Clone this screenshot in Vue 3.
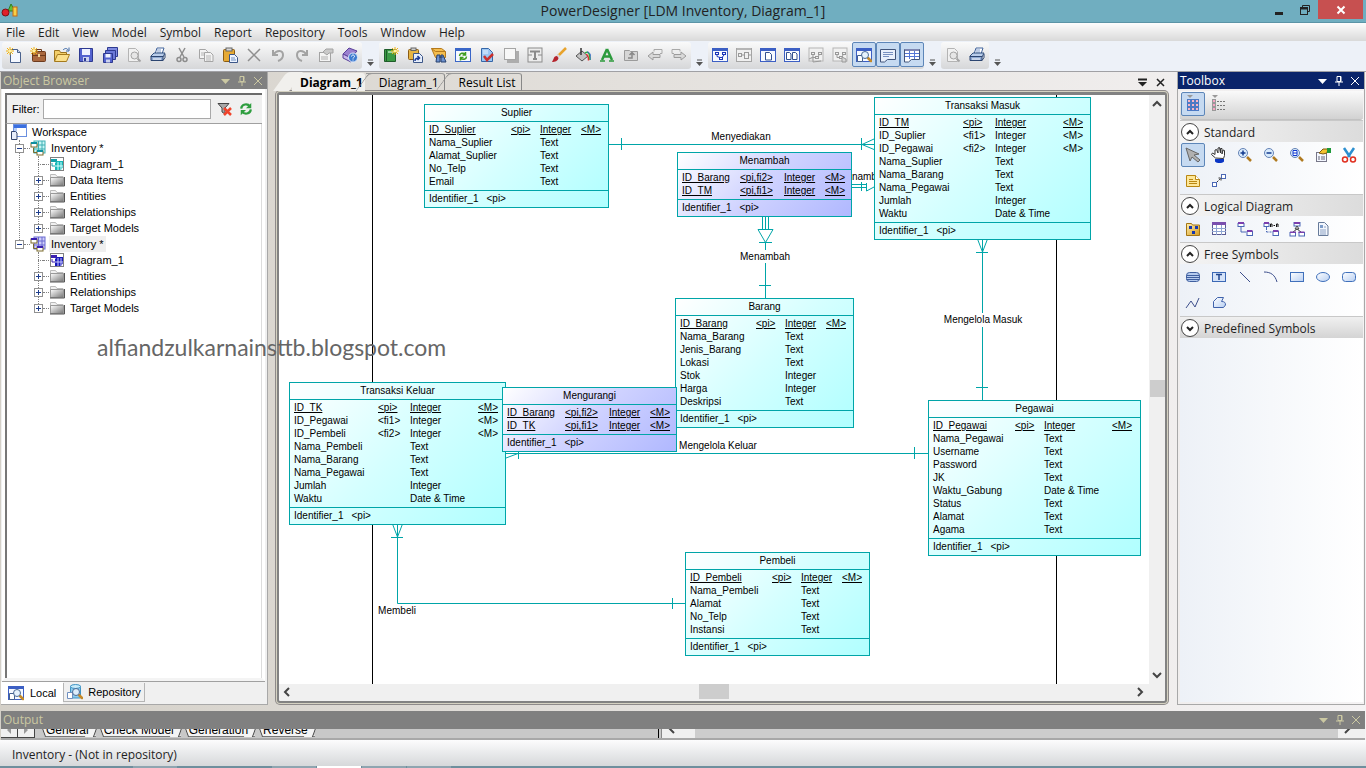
<script setup>
import { ref } from 'vue'

const menus = ['File', 'Edit', 'View', 'Model', 'Symbol', 'Report', 'Repository', 'Tools', 'Window', 'Help']

const spark = '<path d="M4 0v8M0 4h8M1 1l6 6M7 1l-6 6" stroke="#f2b311"/><circle cx="4" cy="4" r="1.5" fill="#fff3a0"/>'
const page = '<path d="M4.500 2.500h7l3 3v10h-10z" fill="#f4f8ff" stroke="#4a628c"/><path d="M11.500 2.500v3h3" fill="#c7d6ee" stroke="#4a628c"/>'
const win = (c) => `<rect x=".5" y="1.500" width="15" height="13" fill="#f6f9ff" stroke="${c}"/><rect x="1" y="1" width="14" height="3" fill="${c}"/>`
const lens = (x, y, c) => `<path d="M${x + 3} ${y + 3}l3 3" stroke="#c58a28" stroke-width="2.500" stroke-linecap="round"/><circle cx="${x}" cy="${y}" r="3.500" fill="#e4f1fc" fill-opacity=".9" stroke="${c}"/>`
const printer = '<path d="M5 7l2-6h7l-2 6" fill="#fff" stroke="#42649c"/><path d="M7 3h4M7 5h4" stroke="#7f9ccc"/><path d="M1 9l3-3h11l-2 4H1z" fill="#b9cdea" stroke="#33507c"/><path d="M1 9.500h12v4H1z" fill="#8fa9d2" stroke="#2c4570"/><path d="M13 13.500l2-3V7" fill="none" stroke="#2c4570"/><path d="M3 12h8" stroke="#fff"/>'
const preview = '<path d="M2.500 1.500h7l3 3v10h-10z" fill="#f1f1f1" stroke="#b4b4b4"/><circle cx="8.500" cy="8.500" r="3.500" fill="#e6e6e6" stroke="#a4a4a4"/><path d="M11.500 11.500l3 3" stroke="#a4a4a4" stroke-width="2"/>'
const grayNodes = '<rect x="3.500" y="5.500" width="3" height="2" fill="none" stroke="#999"/><rect x="10.500" y="5.500" width="3" height="2" fill="none" stroke="#999"/><rect x="7.500" y="9.500" width="3" height="2" fill="none" stroke="#999"/><path d="M5 8v2.500h3M11 8l-1 2" fill="none" stroke="#999"/>'
const folder = '<path d="M1.500 13.500v-11h5l1.500 2h6v9z" fill="#f0f0f0" stroke="#bbb"/><path d="M1.500 13.500V5.500h13v8z" fill="url(#gFold)" stroke="#999"/><path d="M1 14h14.500V5" fill="none" stroke="#555"/>'

const icons = {
  newDoc: page + spark,
  newProject: '<rect x="2.500" y="4.500" width="13" height="10" rx="1" fill="#a9683e" stroke="#6d3b1e"/><path d="M3 8.500h12" stroke="#6d3b1e"/><path d="M6.500 4.500v-2h5v2" fill="none" stroke="#6d3b1e"/><rect x="8" y="7" width="2" height="3" fill="#f0d9a0"/>' + spark,
  open: '<path d="M.500 14V3.500h5l1 2h6V8" fill="#f3cf6b" stroke="#9c7420"/><path d="M.500 14.500l3-7h12l-3 7z" fill="#fbe08c" stroke="#a57a1c"/><path d="M9 3c2-2 4-2 5 0M15 .500v3.500h-3" fill="none" stroke="#3c69a8"/>',
  save: '<path d="M1.500 1.500h13v13h-13z" fill="#5463cf" stroke="#2e3a91"/><rect x="4" y="2" width="8" height="6" fill="#eef2ff"/><rect x="5" y="10" width="6" height="4.500" fill="#ccd3ef"/><rect x="6" y="11" width="2" height="3" fill="#2e3a91"/>',
  saveAll: '<path d="M5.500.500h10v9h-10z" fill="#7f8be0" stroke="#2e3a91"/><path d="M3.500 3.500h10v9h-10z" fill="#6a78d8" stroke="#2e3a91"/><path d="M1.500 6.500h9v9h-9z" fill="#5463cf" stroke="#2e3a91"/><rect x="3.500" y="7" width="5" height="3.500" fill="#eef2ff"/><rect x="4" y="12.500" width="4" height="3" fill="#ccd3ef"/>',
  preview,
  print: printer,
  cut: '<path d="M5 1l5 9M11 1l-5 9" stroke="#8d8d8d" stroke-width="1.500"/><circle cx="5" cy="12.500" r="2" fill="none" stroke="#8d8d8d" stroke-width="1.500"/><circle cx="11" cy="12.500" r="2" fill="none" stroke="#8d8d8d" stroke-width="1.500"/>',
  copy: '<path d="M1.500 2.500h6l2 2v7h-8z" fill="#f3f3f3" stroke="#a5a5a5"/><path d="M6.500 5.500h6l2.500 2.500v6.500H6.500z" fill="#f3f3f3" stroke="#a5a5a5"/><path d="M8 9h5M8 11h5M8 13h5M3 6h3M3 8h3" stroke="#b5b5b5"/>',
  paste: '<rect x="1.500" y="2.500" width="11" height="12" rx="1" fill="#e6aa35" stroke="#8b5c12"/><rect x="4" y="1" width="6" height="3" fill="#d8d8d8" stroke="#666"/><path d="M7.500 7.500h5l3 3v5h-8z" fill="#eef4ff" stroke="#3d5788"/><path d="M9 11h4M9 13h5" stroke="#6f8fc0"/>',
  del: '<path d="M2 2l12 12M14 2L2 14" stroke="#8f8f8f" stroke-width="1.500"/>',
  undo: '<path d="M3 3v5h5M3.500 7.500C7 2.500 13 3 13 8c0 3-2 5-5 6" fill="none" stroke="#a3a3a3" stroke-width="2"/>',
  redo: '<path d="M13 3v5H8M12.500 7.500C9 2.500 3 3 3 8c0 3 2 5 5 6" fill="none" stroke="#a3a3a3" stroke-width="2"/>',
  props: '<rect x="1.500" y="5.500" width="11" height="9" fill="#f4f4f4" stroke="#a3a3a3"/><path d="M3 10h7M3 12h7" stroke="#b0b0b0"/><path d="M5 5l3-3h7v4h-4l-2 2z" fill="#c9c9c9" stroke="#a3a3a3"/>',
  help: '<path d="M1 7l6-6 8 3-6 7z" fill="#9a80cf" stroke="#5a3f9a"/><path d="M1 7v4l8 4V11z" fill="#c9b9ea" stroke="#5a3f9a"/><circle cx="11" cy="10.500" r="4.500" fill="#3d7bd0" stroke="#dce8fa"/><path d="M9.500 9.500c0-2 3-2 3 0 0 1-1.500 1-1.500 2M11 12.500v1" fill="none" stroke="#fff"/>',
  greenBook: '<path d="M1.500 2.500h11v12h-11z" fill="#3b9a45" stroke="#1f5d2a"/><path d="M3.500 3v11" stroke="#1f5d2a"/><rect x="5" y="4" width="6" height="2" fill="#9ad49e"/><g transform="translate(8 0)">' + spark + '</g>',
  pasteLink: '<rect x="1.500" y="2.500" width="10" height="10" rx="1" fill="#e6b545" stroke="#8b5c12"/><rect x="4" y="1" width="5" height="2.500" fill="#cfcfcf" stroke="#666"/><path d="M6.500 6.500h6l3 3v6h-9z" fill="#e7effc" stroke="#3d5788"/><path d="M8 14c0-3 2-3 4-3M10.500 9l2 2-2 2" fill="none" stroke="#1d3b98" stroke-width="1.500"/>',
  find: '<path d="M.500 1.500l10 0 4 3v6H4.500z" fill="#f4bd4e" stroke="#b5791a"/><path d="M.500 1.500l4 3h10" fill="none" stroke="#b5791a"/><path d="M6 8h3v7H5zM12 8h-2v7h5z" fill="#6f93d0" stroke="#26406f"/><path d="M8 10h4" stroke="#26406f"/>',
  refreshWin: win('#3a66c8') + '<path d="M4.500 9c0-3 4-3.500 5.500-2M10.500 5v3h-3" fill="none" stroke="#3f9c1f" stroke-width="1.500"/><path d="M11.500 9.500c0 3-4 3.500-5.500 2M5.500 13.500v-3h3" fill="none" stroke="#3f9c1f" stroke-width="1.500"/>',
  check: '<path d="M2.500 1.500h7l4 4v9h-11z" fill="#9cc6f2" stroke="#3566a8"/><path d="M4 4h5M4 6h5" stroke="#e8f3ff"/><path d="M5 9l3 4 6-6" fill="none" stroke="#c9302c" stroke-width="2.500"/>',
  shadow: '<rect x="4" y="4" width="12" height="12" fill="#adadad"/><rect x="1.500" y="1.500" width="11" height="11" fill="#f7f7f7" stroke="#a5a5a5"/>',
  textFit: '<rect x="1" y="1" width="14" height="14" fill="#ececec" stroke="#8c8c8c"/><path d="M4 5.500V4.500h8v1M8 4.500v7M6 12h4" fill="none" stroke="#8a8a8a" stroke-width="2"/><path d="M1 8h4M11 8h4" stroke="#8a8a8a"/>',
  brush: '<path d="M15 1L7 9" stroke="#e8a32c" stroke-width="2.500"/><path d="M8 8l-2 2" stroke="#d8d8d8" stroke-width="3"/><path d="M6 9c-2 0-3 1-3.500 3L1 15c3 0 6-1 6.500-4z" fill="#b4232c"/>',
  bucket: '<path d="M1 9l6-5 6 5-6 5z" fill="#c4c4c4" stroke="#555"/><path d="M6 8V1" stroke="#333" stroke-width="1.500"/><path d="M10 6c3-2 5 0 5 7" fill="none" stroke="#2faf3a" stroke-width="1.500"/><path d="M11 7.500c2 0 2.500 2 2.500 6" fill="none" stroke="#d33" stroke-width="1.500"/><path d="M12 5c3 0 4 3 4 8" fill="none" stroke="#36c" />',
  font: '<path d="M8 2L3 13M8 2l5 11M5 9.500h6" fill="none" stroke="#2c9a3d" stroke-width="2.500"/><path d="M1 14h5M10 14h5" stroke="#2c9a3d" stroke-width="1.500"/>',
  upFolder: '<path d="M1.500 13.500v-10h5l1 1h7v9z" fill="#d6d6d6" stroke="#9b9b9b"/><path d="M5 11h4V6M6.500 8L9 5.500 11.500 8" fill="none" stroke="#888" stroke-width="1.500"/>',
  back: '<path d="M1 9l5-4v2.500h7v3H6V13z" fill="#d9d9d9" stroke="#9b9b9b"/><path d="M7 4.500V2.500h8v4h-2" fill="none" stroke="#a9a9a9"/>',
  fwd: '<path d="M15 9l-5-4v2.500H3v3h7V13z" fill="#d9d9d9" stroke="#9b9b9b"/><path d="M9 4.500V2.500H1v4h2" fill="none" stroke="#a9a9a9"/>',
  diagWin: win('#3c5fc4') + '<rect x="3.500" y="5.500" width="3" height="2" fill="none" stroke="#1b35b8"/><rect x="10.500" y="5.500" width="3" height="2" fill="none" stroke="#1b35b8"/><rect x="7.500" y="10.500" width="3" height="2" fill="none" stroke="#1b35b8"/><path d="M5 8v1.500l3 1M12 8l-2 2.500" fill="none" stroke="#1b35b8"/>',
  nodesGray: '<rect x=".500" y="1.500" width="15" height="13" fill="#f0f0f0" stroke="#a5a5a5"/><rect x="1" y="1" width="14" height="2" fill="#b5b5b5"/><rect x="2.500" y="6.500" width="3" height="3" fill="none" stroke="#999"/><rect x="8.500" y="5.500" width="4" height="6" fill="none" stroke="#999"/><path d="M5.500 8h3M12.500 8H15" stroke="#999"/>',
  pageWin: win('#3c5fc4') + '<path d="M5.500 5.500h4l2 2v5.500h-6z" fill="#fff" stroke="#33518e"/>',
  pagesWin: win('#3c5fc4') + '<path d="M2.500 5.500h3l1.500 1.500v5.500H2.500zM8.500 5.500h3l1.500 1.500v5.500H8.500z" fill="#fff" stroke="#33518e"/>',
  handNodes: '<rect x="1" y="1" width="14" height="13" fill="#f1f1f1" stroke="#b5b5b5"/>' + grayNodes + '<path d="M1 12l4-2v5l8-1" fill="#d6d6d6" stroke="#999"/>',
  nodesHand: '<rect x="1" y="1" width="14" height="13" fill="#f1f1f1" stroke="#b5b5b5"/>' + grayNodes + '<path d="M10 10l4 2v3h-4z" fill="#d6d6d6" stroke="#999"/>',
  winLens: win('#3c5fc4') + '<path d="M1.500 8.500h5v6h-5z" fill="#fff" stroke="#44608f"/>' + lens(9, 8, '#4b6a94'),
  note: '<path d="M.500 2.500h15v10h-8l-3 2.500H.500z" fill="#e9f0fb" stroke="#41547a"/><path d="M3 5.500h10M3 7.500h10M3 9.500h6" stroke="#7890c0"/>',
  gridWin: '<path d="M.500 2.500h15v10h-8l-3 2.500H.500z" fill="#fff" stroke="#41547a"/><rect x="1" y="2" width="14" height="2" fill="#7e86b2"/><path d="M1 6.500h14M1 9.500h14M5.500 4v8M10.500 4v8" stroke="#5577d6"/>',
  workspace: '<rect x="2.500" y=".500" width="13" height="12" fill="#fff" stroke="#6a8fe0"/><rect x="3" y="1" width="12" height="3" fill="#3a6fe0"/><rect x="3" y="4" width="3" height="8" fill="#b7cdf4"/><path d="M.500 7.500h4l1.500 1.500v6.500H.500z" fill="#e8eefb" stroke="#34466d"/>',
  model: '<rect x="4" y="1" width="11" height="12" fill="#c8f6f6" stroke="#3fb0b4"/><path d="M8.500 1v12M4 5h11M4 9h11M12 1v12" stroke="#3fb0b4"/><path d="M3.500 8v4.500H7" fill="none" stroke="#7a6a2a"/><rect x="1" y="3" width="6" height="4" fill="#fff" stroke="#7a6a2a"/><rect x="1" y="2" width="6" height="2" fill="#0d8fa0"/><rect x="7" y="11" width="6" height="4" fill="#fff" stroke="#7a6a2a"/><rect x="7" y="10" width="6" height="2" fill="#0d8fa0"/>',
  modelB: '<rect x="4" y="1" width="11" height="12" fill="#cfcffa" stroke="#6a6ad0"/><path d="M8.500 1v12M4 5h11M4 9h11M12 1v12" stroke="#6a6ad0"/><path d="M3.500 8v4.500H7" fill="none" stroke="#7a6a2a"/><rect x="1" y="3" width="6" height="4" fill="#fff" stroke="#7a6a2a"/><rect x="1" y="2" width="6" height="2" fill="#3a1fb0"/><rect x="7" y="11" width="6" height="4" fill="#fff" stroke="#7a6a2a"/><rect x="7" y="10" width="6" height="2" fill="#3a1fb0"/>',
  diagram: '<rect x="1.500" y="1.500" width="13" height="13" fill="#fff" stroke="#808080"/><rect x="2" y="3" width="6" height="3" fill="#12a0a8"/><path d="M3 7v3h3" fill="none" stroke="#12a0a8"/><path d="M6 7l2-2h6v6l-2 3H6z" fill="#14b8b8"/><path d="M6 10h8M9 6v8M12 6v8" stroke="#d5ffff"/>',
  diagramB: '<rect x="1.500" y="1.500" width="13" height="13" fill="#fff" stroke="#808080"/><rect x="2" y="3" width="6" height="3" fill="#3a1fb0"/><path d="M3 7v3h3" fill="none" stroke="#3a1fb0"/><path d="M6 7l2-2h6v6l-2 3H6z" fill="#1818b8"/><path d="M6 10h8M9 6v8M12 6v8" stroke="#c8c8ff"/>',
  folder,
  repo: '<path d="M3.500 2v12h10V2z" fill="#8ccdf0" stroke="#3f93c4"/><ellipse cx="8.500" cy="2.500" rx="5" ry="2" fill="#c9ecfb" stroke="#3f93c4"/><path d="M.500 8.500h5v6h-5z" fill="#fff" stroke="#6f8fc0"/>' + lens(9, 8, '#4b6a94'),
  clearFilter: '<path d="M1 2.500h11L8 7v6l-3-2V7z" fill="#a8a8a8" stroke="#444"/><path d="M7 7l7 7M14 7l-7 7" stroke="#f0442c" stroke-width="2.500"/>',
  reload: '<path d="M2.500 7.500C3 2 10 1.500 12.500 5" fill="none" stroke="#2e9e3f" stroke-width="2.500"/><path d="M14 1v6H8z" fill="#2e9e3f"/><path d="M13.500 8.500C13 14 6 14.500 3.500 11" fill="none" stroke="#2e9e3f" stroke-width="2.500"/><path d="M2 15V9h6z" fill="#2e9e3f"/>',
  pointer: '<path d="M1 1l13 6-5 1 6 5-2 2-6-5-2 4z" fill="#b0b0b0" stroke="#666"/>',
  hand: '<path d="M4.500 11L.500 7.500l1-1.500 2.500 1.500V3l1.500-.500L7 6V1l1.500-.500L9.500 6V1.500l1.500 0V7l1-4 1.500.500v5l-1 3z" fill="#fff" stroke="#333"/><path d="M4 12h9v2.500c-2 2-7 2-9 0z" fill="#0a35c4"/>',
  zoomIn: '<path d="M10 10l4 4" stroke="#b07a20" stroke-width="2.500"/><circle cx="6" cy="6" r="4.500" fill="#d9ebfc" stroke="#6482b5"/><path d="M3.500 6h5M6 3.500v5" stroke="#123a8f" stroke-width="1.500"/>',
  zoomOut: '<path d="M10 10l4 4" stroke="#b07a20" stroke-width="2.500"/><circle cx="6" cy="6" r="4.500" fill="#d9ebfc" stroke="#6482b5"/><path d="M3.500 6h5" stroke="#123a8f" stroke-width="1.500"/>',
  zoomFit: '<path d="M10 10l4 4" stroke="#b07a20" stroke-width="2.500"/><circle cx="6" cy="6" r="4.500" fill="#d9ebfc" stroke="#6482b5"/><path d="M4 3.500h4v5H4zM4 6h4" fill="#fff" stroke="#123ad0"/>',
  propsCol: '<rect x="1.500" y="5.500" width="10" height="9" fill="#f4f7ff" stroke="#778"/><path d="M3 10h2M6 10h4M3 12h2M6 12h4" stroke="#667"/><path d="M4 6l4-4h5l-1 4-4 1z" fill="#f2c22e" stroke="#7c5a10"/><rect x="12" y="1" width="4" height="5" fill="#1f9a3a"/>',
  scissors: '<path d="M3 1l6 9M13 1L7 10" stroke="#2c8fd0" stroke-width="2.500"/><circle cx="4" cy="12.500" r="2.500" fill="none" stroke="#e03020" stroke-width="1.500"/><circle cx="12" cy="12.500" r="2.500" fill="none" stroke="#e03020" stroke-width="1.500"/>',
  noteY: '<path d="M1.500 2.500h9l4 4v7h-13z" fill="#fde79a" stroke="#b98712"/><path d="M10.500 2.500v4h4" fill="#fff" stroke="#b98712"/><path d="M4 6.500h4M4 8.500h8M4 10.500h8" stroke="#b98712"/>',
  link: '<rect x="1.500" y="9.500" width="4" height="4" fill="#fff" stroke="#4a67b5"/><rect x="10.500" y="1.500" width="4" height="4" fill="#fff" stroke="#4a67b5"/><path d="M6 9l4-4M7.500 5H10v2.500" fill="none" stroke="#333" stroke-dasharray="2 1"/>',
  pkg: '<path d="M1.500 14.500v-12h5l1 1.500h7v10.500z" fill="url(#gGold)" stroke="#a47616"/><path d="M4 5h3v3H4zM10 5h3v3h-3zM7 10h3v3H7z" fill="#1437b0"/>',
  entity: '<rect x="1.500" y="1.500" width="13" height="12" fill="#fff" stroke="#5a5a92"/><rect x="1" y="1" width="14" height="3" fill="#7a4fae"/><path d="M1 7.500h14M1 10.500h14M5.500 4v10M10.500 4v10" stroke="#8fa5d2"/>',
  rel: '<rect x="1" y="2.500" width="6" height="3" fill="#fff" stroke="#4a67b5"/><rect x="1" y="1" width="6" height="2" fill="#7a3fae"/><path d="M4 6v5h5" fill="none" stroke="#4a67b5"/><rect x="10" y="10.500" width="5.500" height="4" fill="#fff" stroke="#4a67b5"/><rect x="10" y="9" width="5.500" height="2" fill="#7a3fae"/>',
  nn: '<rect x="1" y="2.500" width="5" height="3" fill="#fff" stroke="#4a67b5"/><rect x="1" y="1" width="5" height="2" fill="#7a3fae"/><path d="M3.500 6v5h5" fill="none" stroke="#4a67b5" stroke-dasharray="3 1"/><rect x="10" y="10.500" width="5.500" height="4" fill="#fff" stroke="#4a67b5"/><rect x="10" y="9" width="5.500" height="2" fill="#7a3fae"/><path d="M7.500 6V3H9v3M13.500 6V3H15v3M10.500 4.500H12" fill="none" stroke="#111"/>',
  inherit: '<rect x="5" y="1.500" width="6" height="3.500" fill="#fff" stroke="#4a67b5"/><rect x="5" y="1" width="6" height="2" fill="#7a3fae"/><path d="M8 5L6 8h4zM8 8L4 11M8 8l4 3" fill="none" stroke="#444"/><rect x="1" y="11.500" width="5.500" height="3.500" fill="#fff" stroke="#4a67b5"/><rect x="1" y="10.500" width="6" height="1.500" fill="#7a3fae"/><rect x="10" y="11.500" width="5.500" height="3.500" fill="#fff" stroke="#4a67b5"/><rect x="9.500" y="10.500" width="6" height="1.500" fill="#7a3fae"/>',
  file: '<path d="M3.500 1.500h6l3.500 3.500v9.500H3.500z" fill="#f2f6fd" stroke="#667a99"/><rect x="5" y="4" width="3" height="3" fill="#7d9cc9"/><path d="M5 9h6M5 11h6M5 13h6M9 6h2" stroke="#8ea3c4"/>',
  title: '<rect x="1.500" y="3.500" width="13" height="9" rx="3" fill="#b5cbee" stroke="#3f5f9f"/><path d="M1.500 6.500h13M1.500 8.500h13M1.500 10.500h13" stroke="#3f5f9f"/>',
  text: '<rect x="1.500" y="3.500" width="13" height="9" fill="#d4e2f8" stroke="#3b68b5"/><path d="M5 5.500h6M8 5.500V11" stroke="#1f458e" stroke-width="1.500"/>',
  line: '<path d="M3 3l10 10" stroke="#3d4f8c"/>',
  arc: '<path d="M1 3c7 0 11 3 13 10" fill="none" stroke="#3d4f8c"/>',
  rect: '<rect x="1.500" y="3.500" width="13" height="9" fill="url(#gBlue)" stroke="#4070bb"/>',
  ellipse: '<ellipse cx="8" cy="8" rx="6.500" ry="4.500" fill="url(#gBlue)" stroke="#4070bb"/>',
  rrect: '<rect x="1.500" y="3.500" width="13" height="9" rx="3" fill="url(#gBlue)" stroke="#4070bb"/>',
  poly: '<path d="M1 13l5-7 4 6 4-9" fill="none" stroke="#3d4f8c"/>',
  polygon: '<path d="M2.500 12.500V6.500l4-4h6l-2 4c3 0 4 1 4 3.500l-2 2.500z" fill="url(#gBlue)" stroke="#4062ab"/>',
  viewGrid: '<path d="M2 0h6L5 3z" fill="#999"/>' + [0, 1, 2].map(r => [0, 1, 2].map(c => `<rect x="${2.500 + c * 4}" y="${4.500 + r * 4}" width="3" height="3" fill="#f7b5c5" stroke="#4c79c4"/>`).join('')).join(''),
  viewList: '<path d="M1 0h6L4 3z" fill="#999"/>' + [0, 1, 2].map(r => `<rect x="1.500" y="${4.500 + r * 4}" width="3" height="3" fill="#f7a5c5" stroke="#999"/><path d="M6 ${6.500 + r * 4}h9" stroke="#777" stroke-dasharray="2 1"/>`).join('')
}

const toolbars = [
  ['newDoc', 'newProject', 'open', 'save', 'saveAll', 'preview', 'print', 'cut', 'copy', 'paste', 'del', 'undo', 'redo', 'props', 'help'],
  ['greenBook', 'pasteLink', 'find', 'refreshWin', 'check', 'shadow', 'textFit', 'brush', 'bucket', 'font', 'upFolder', 'back', 'fwd'],
  ['diagWin', 'nodesGray', 'pageWin', 'pagesWin', 'handNodes', 'nodesHand', 'winLens', 'note', 'gridWin'],
  ['preview', 'print']
]
const pressed = ['winLens', 'note', 'gridWin']

const filter = ref('')
const tree = [
  {
    label: 'Inventory *', icon: 'model', selected: false, kids: [
      { label: 'Diagram_1', icon: 'diagram' }, { label: 'Data Items', icon: 'folder' }, { label: 'Entities', icon: 'folder' },
      { label: 'Relationships', icon: 'folder' }, { label: 'Target Models', icon: 'folder' }
    ]
  },
  {
    label: 'Inventory *', icon: 'modelB', selected: true, kids: [
      { label: 'Diagram_1', icon: 'diagramB' }, { label: 'Entities', icon: 'folder' },
      { label: 'Relationships', icon: 'folder' }, { label: 'Target Models', icon: 'folder' }
    ]
  }
]

const pi = '<pi>'
const M = '<M>'
// cols: widths of the name, key and type columns
const entities = [
  { name: 'Suplier', x: 145, y: 9, w: 185, cols: [82, 29, 41], rows: [['ID_Suplier', pi, 'Integer', M, 1], ['Nama_Suplier', '', 'Text'], ['Alamat_Suplier', '', 'Text'], ['No_Telp', '', 'Text'], ['Email', '', 'Text']] },
  { name: 'Barang', x: 396, y: 203, w: 179, cols: [76, 29, 41], rows: [['ID_Barang', pi, 'Integer', M, 1], ['Nama_Barang', '', 'Text'], ['Jenis_Barang', '', 'Text'], ['Lokasi', '', 'Text'], ['Stok', '', 'Integer'], ['Harga', '', 'Integer'], ['Deskripsi', '', 'Text']] },
  { name: 'Menambah', x: 398, y: 57, w: 175, link: true, cols: [58, 44, 41], rows: [['ID_Barang', '<pi,fi2>', 'Integer', M, 1], ['ID_TM', '<pi,fi1>', 'Integer', M, 1]] },
  { name: 'Transaksi Masuk', x: 595, y: 2, w: 217, cols: [84, 32, 68], rows: [['ID_TM', pi, 'Integer', M, 1], ['ID_Suplier', '<fi1>', 'Integer', M], ['ID_Pegawai', '<fi2>', 'Integer', M], ['Nama_Suplier', '', 'Text'], ['Nama_Barang', '', 'Text'], ['Nama_Pegawai', '', 'Text'], ['Jumlah', '', 'Integer'], ['Waktu', '', 'Date & Time']] },
  { name: 'Transaksi Keluar', x: 10, y: 287, w: 217, cols: [84, 32, 68], rows: [['ID_TK', pi, 'Integer', M, 1], ['ID_Pegawai', '<fi1>', 'Integer', M], ['ID_Pembeli', '<fi2>', 'Integer', M], ['Nama_Pembeli', '', 'Text'], ['Nama_Barang', '', 'Text'], ['Nama_Pegawai', '', 'Text'], ['Jumlah', '', 'Integer'], ['Waktu', '', 'Date & Time']] },
  { name: 'Mengurangi', x: 223, y: 292, w: 175, link: true, cols: [58, 44, 41], rows: [['ID_Barang', '<pi,fi2>', 'Integer', M, 1], ['ID_TK', '<pi,fi1>', 'Integer', M, 1]] },
  { name: 'Pegawai', x: 649, y: 305, w: 213, cols: [82, 29, 68], rows: [['ID_Pegawai', pi, 'Integer', M, 1], ['Nama_Pegawai', '', 'Text'], ['Username', '', 'Text'], ['Password', '', 'Text'], ['JK', '', 'Text'], ['Waktu_Gabung', '', 'Date & Time'], ['Status', '', 'Text'], ['Alamat', '', 'Text'], ['Agama', '', 'Text']] },
  { name: 'Pembeli', x: 406, y: 457, w: 185, cols: [82, 29, 41], rows: [['ID_Pembeli', pi, 'Integer', M, 1], ['Nama_Pembeli', '', 'Text'], ['Alamat', '', 'Text'], ['No_Telp', '', 'Text'], ['Instansi', '', 'Text']] }
]
const place = (e) => ({ left: e.x + 'px', top: e.y + 'px', width: e.w + 'px' })
const columns = (e) => ({ gridTemplateColumns: e.cols.map(c => c + 'px').join(' ') + ' 1fr' })

const palette = [
  { title: 'Standard', open: true, tools: ['pointer', 'hand', 'zoomIn', 'zoomOut', 'zoomFit', 'propsCol', 'scissors', 'noteY', 'link'] },
  { title: 'Logical Diagram', open: true, tools: ['pkg', 'entity', 'rel', 'nn', 'inherit', 'file'] },
  { title: 'Free Symbols', open: true, tools: ['title', 'text', 'line', 'arc', 'rect', 'ellipse', 'rrect', 'poly', 'polygon'] },
  { title: 'Predefined Symbols', open: false, tools: [] }
]
const outTabs = ['General', 'Check Model', 'Generation', 'Reverse']
</script>

<template>
  <div class="app">
    <svg class="defs" width="0" height="0" aria-hidden="true">
      <defs>
        <linearGradient id="gFold" x1="0" y1="0" x2="1" y2="1"><stop offset="0" stop-color="#fff" /><stop offset="1" stop-color="#777" /></linearGradient>
        <linearGradient id="gGold" x1="0" y1="0" x2="1" y2="1"><stop offset="0" stop-color="#fff0b0" /><stop offset="1" stop-color="#d69a1e" /></linearGradient>
        <linearGradient id="gBlue" x1="0" y1="0" x2="1" y2="1"><stop offset="0" stop-color="#fff" /><stop offset="1" stop-color="#b8cff2" /></linearGradient>
      </defs>
    </svg>

    <header class="title">
      <svg class="logo" width="18" height="16" viewBox="0 0 18 16"><path d="M7 8l3-7 4 7z" fill="#5fbf3a" stroke="#2f7d22" /><circle cx="4.500" cy="9.500" r="3.500" fill="#e0202a" stroke="#7d1015" /><rect x="12" y="4" width="4" height="9" fill="#f7d047" stroke="#c86a12" /></svg>
      <h1>PowerDesigner [LDM Inventory, Diagram_1]</h1>
      <div class="winbtns">
        <button aria-label="Minimize"><svg width="10" height="10"><path d="M1 8.500h8" stroke="#222" stroke-width="3" /></svg></button>
        <button aria-label="Restore"><svg width="12" height="12"><path d="M3.500 3V1.500h7v6H9" fill="none" stroke="#222" /><rect x="1.500" y="3.500" width="7" height="7" fill="none" stroke="#222" /><path d="M1 4.500h8" stroke="#222" stroke-width="2" /></svg></button>
        <button class="close" aria-label="Close"><svg width="10" height="10"><path d="M1.500 1.500l7 7M8.500 1.500l-7 7" stroke="#fff" stroke-width="2" /></svg></button>
      </div>
    </header>

    <nav class="menu"><button v-for="m in menus" :key="m">{{ m }}</button></nav>

    <div class="toolbar">
      <template v-for="(g, gi) in toolbars" :key="gi">
        <div class="group">
          <button v-for="i in g" :key="i" :class="{ on: pressed.includes(i) }" :aria-label="i"><svg width="16" height="16" viewBox="0 0 16 16" v-html="icons[i]" /></button>
        </div>
        <button class="more" aria-label="Toolbar options"><svg width="7" height="8"><path d="M1 1h5" stroke="#555" /><path d="M0 3h7L3.500 7z" fill="#555" /></svg></button>
      </template>
    </div>

    <main>
      <aside class="browser">
        <div class="cap">
          <h2>Object Browser</h2>
          <button aria-label="Menu"><svg width="10" height="10"><path d="M0 3h9L4.500 8z" fill="currentColor" /></svg></button>
          <button aria-label="Pin"><svg width="10" height="12"><path d="M3 1.500h4v5H3zM1 7h8M5 7v4M6.500 2v5" fill="none" stroke="currentColor" /></svg></button>
          <button aria-label="Close"><svg width="10" height="10"><path d="M1 1l8 8M9 1L1 9" stroke="currentColor" /></svg></button>
        </div>
        <div class="well">
          <div class="filter">
            <label for="filter">Filter:</label>
            <input id="filter" v-model="filter" type="text">
            <button aria-label="Clear filter"><svg width="16" height="16" viewBox="0 0 16 16" v-html="icons.clearFilter" /></button>
            <button aria-label="Refresh"><svg width="14" height="16" viewBox="0 0 16 16" v-html="icons.reload" /></button>
          </div>
          <div class="tree">
            <div class="node root"><svg width="16" height="16" viewBox="0 0 16 16" v-html="icons.workspace" /><span>Workspace</span></div>
            <ul class="models">
              <li v-for="(t, ti) in tree" :key="ti">
                <div class="node">
                  <button class="exp" aria-label="Collapse"><svg width="9" height="9"><rect x=".5" y=".5" width="8" height="8" fill="#fff" stroke="#919191" /><path d="M2 4.500h5" stroke="#1d3c8c" /></svg></button><i></i>
                  <svg width="16" height="16" viewBox="0 0 16 16" v-html="icons[t.icon]" /><span :class="{ sel: t.selected }">{{ t.label }}</span>
                </div>
                <ul class="kids">
                  <li v-for="k in t.kids" :key="k.label" class="node">
                    <button v-if="k.icon === 'folder'" class="exp" aria-label="Expand"><svg width="9" height="9"><rect x=".5" y=".5" width="8" height="8" fill="#fff" stroke="#919191" /><path d="M2 4.500h5M4.500 2v5" stroke="#1d3c8c" /></svg></button>
                    <b v-else></b><i></i>
                    <svg width="16" height="16" viewBox="0 0 16 16" v-html="icons[k.icon]" /><span>{{ k.label }}</span>
                  </li>
                </ul>
              </li>
            </ul>
          </div>
        </div>
        <div class="btabs">
          <button class="cur"><svg width="16" height="16" viewBox="0 0 16 16" v-html="icons.winLens" />Local</button>
          <button><svg width="16" height="16" viewBox="0 0 16 16" v-html="icons.repo" />Repository</button>
        </div>
      </aside>

      <section class="work">
        <div class="dtabs">
          <button class="cur">Diagram_1</button><button>Diagram_1</button><button>Result List</button>
          <span class="fill"></span>
          <button class="ctl" aria-label="Window list"><svg width="9" height="9"><path d="M0 1.500h9" stroke="#222" stroke-width="2" /><path d="M0 4h9L4.500 8.500z" fill="#222" /></svg></button>
          <button class="ctl" aria-label="Close window"><svg width="9" height="9"><path d="M1 1l7 7M8 1L1 8" stroke="#222" stroke-width="1.500" /></svg></button>
        </div>
        <div class="frame">
          <div class="canvas">
            <svg class="wires" width="870" height="589" viewBox="279 95 870 589">
              <g stroke="#000" fill="none"><path d="M372.500 95V684M1056.500 95V684" /></g>
              <g stroke="#00a5a8" fill="none">
                <path d="M609 144.500H874M621.500 138v12M861.500 138v12M874 139l-12 5.500 12 5" />
                <path d="M852 184.500h14M852 187.500h14M861.500 182v9M874 187l-7.500 4v-8" />
                <path d="M762.500 216v13M765.500 216v13M768.500 216v13M758 229.500h15l-7.500 13zM759 242.500h13M765.500 243v7M765.500 263v36M759 285.500h12" />
                <path d="M982.500 239v74M982.500 327v74M977.500 239l5 13 5-13M976 252.500h12M976 387.500h12" />
                <path d="M506 453.500H928M506 458l12-4.500M518.500 448v11M914.500 447v12" />
                <path d="M397.500 524v79.500H685M392.500 524l5 13 5-13M391 537.500h12M672.500 598v11" />
              </g>
              <g class="lbl" text-anchor="middle">
                <text x="741" y="140">Menyediakan</text>
                <text x="863" y="180">Menambah</text>
                <text x="765" y="260">Menambah</text>
                <text x="983" y="323">Mengelola Masuk</text>
                <text x="718" y="449">Mengelola Keluar</text>
                <text x="397" y="614">Membeli</text>
              </g>
            </svg>
            <article v-for="e in entities" :key="e.name" class="entity" :class="{ assoc: e.link }" :style="place(e)">
              <h3>{{ e.name }}</h3>
              <div class="attrs">
                <div v-for="r in e.rows" :key="r[0]" class="attr" :class="{ key: r[4] }" :style="columns(e)">
                  <span v-for="c in 4" :key="c">{{ r[c - 1] }}</span>
                </div>
              </div>
              <footer><span>Identifier_1</span><span>{{ pi }}</span></footer>
            </article>
          </div>
          <div class="vbar">
            <svg width="10" height="8"><path d="M1 6l4-4 4 4" fill="none" stroke="#444" stroke-width="2" /></svg>
            <span></span>
            <svg width="10" height="8"><path d="M1 2l4 4 4-4" fill="none" stroke="#444" stroke-width="2" /></svg>
          </div>
          <div class="hbar">
            <svg width="8" height="10"><path d="M6 1L2 5l4 4" fill="none" stroke="#444" stroke-width="2" /></svg>
            <span></span>
            <svg width="8" height="10"><path d="M2 1l4 4-4 4" fill="none" stroke="#444" stroke-width="2" /></svg>
          </div>
        </div>
      </section>

      <aside class="toolbox">
        <div class="cap navy">
          <h2>Toolbox</h2>
          <button aria-label="Menu"><svg width="10" height="10"><path d="M0 3h9L4.500 8z" fill="currentColor" /></svg></button>
          <button aria-label="Pin"><svg width="10" height="12"><path d="M3 1.500h4v5H3zM1 7h8M5 7v4M6.500 2v5" fill="none" stroke="currentColor" /></svg></button>
          <button aria-label="Close"><svg width="10" height="10"><path d="M1 1l8 8M9 1L1 9" stroke="currentColor" /></svg></button>
        </div>
        <div class="tbody">
          <div class="views">
            <button class="on" aria-label="Icon view"><svg width="16" height="18" viewBox="0 0 16 18" v-html="icons.viewGrid" /></button>
            <button aria-label="List view"><svg width="16" height="18" viewBox="0 0 16 18" v-html="icons.viewList" /></button>
          </div>
          <template v-for="p in palette" :key="p.title">
            <button class="sect" :class="{ shut: !p.open }"><svg width="20" height="20" viewBox="0 0 20 20"><circle cx="10" cy="10" r="8.500" fill="#fff" stroke="#444" /><path :d="p.open ? 'M7 12l3-3 3 3' : 'M7 9l3 3 3-3'" fill="none" stroke="#222" stroke-width="2" /></svg><span>{{ p.title }}</span></button>
            <div v-if="p.tools.length" class="tools">
              <button v-for="t in p.tools" :key="t" :class="{ on: t === 'pointer' }" :aria-label="t"><svg width="16" height="16" viewBox="0 0 16 16" v-html="icons[t]" /></button>
            </div>
          </template>
        </div>
      </aside>
      <p class="mark">alfiandzulkarnainsttb.blogspot.com</p>
    </main>

    <section class="output">
      <div class="cap">
        <h2>Output</h2>
        <button aria-label="Menu"><svg width="10" height="10"><path d="M0 3h9L4.500 8z" fill="currentColor" /></svg></button>
        <button aria-label="Pin"><svg width="10" height="12"><path d="M3 1.500h4v5H3zM1 7h8M5 7v4M6.500 2v5" fill="none" stroke="currentColor" /></svg></button>
        <button aria-label="Close"><svg width="10" height="10"><path d="M1 1l8 8M9 1L1 9" stroke="currentColor" /></svg></button>
      </div>
      <div class="obody">
        <div class="otabs">
          <button class="step" aria-label="Previous tab"><svg width="8" height="10"><path d="M6 1v8L2 5z" fill="#999" /></svg></button>
          <button class="step" aria-label="Next tab"><svg width="8" height="10"><path d="M2 1v8l4-4z" fill="#999" /></svg></button>
          <button v-for="o in outTabs" :key="o" class="otab">{{ o }}</button>
        </div>
        <div class="oscroll">
          <svg width="8" height="16"><path d="M6 3L2 7l4 4" fill="none" stroke="#444" stroke-width="2" /></svg>
          <span></span>
          <svg width="8" height="16"><path d="M2 11l4-4-4-4" fill="none" stroke="#444" stroke-width="2" /></svg>
        </div>
      </div>
    </section>
    <footer class="status">Inventory - (Not in repository)</footer>
    <div class="task"><span></span><span></span><span class="lit"></span><span></span><span></span></div>
  </div>
</template>

<style>
html, body { margin: 0; background: #d4d0c8; overflow: hidden; }
</style>

<style scoped>
.app { display: flex; flex-direction: column; height: 100vh; font: 12px/16px "Open Sans", "Noto Sans", sans-serif; color: #1e1e1e; background: linear-gradient(90deg, #d4d0c8, #f5f3f4); overflow: hidden; }
.defs { position: absolute; }
* { box-sizing: border-box; }
button { margin: 0; padding: 0; border: 0; background: none; font: inherit; color: inherit; }
svg { display: block; flex: none; }
h1, h2, h3, p, ul { margin: 0; padding: 0; font-weight: 400; list-style: none; }

.title { position: relative; display: flex; align-items: center; height: 23px; background: #70aec0; border-bottom: 1px solid #5b94a6; }
.logo { margin-left: 1px; }
.title h1 { flex: 1; padding-right: 19px; text-align: center; font-size: 14px; line-height: 20px; color: #222; }
.winbtns { position: absolute; right: 3px; top: 0; display: flex; height: 19px; }
.winbtns button { display: flex; align-items: center; justify-content: center; width: 26px; }
.winbtns .close { width: 45px; background: #c75050; }

.menu { display: flex; align-items: center; gap: 13px; height: 18px; padding: 2px 0 0 6px; background: linear-gradient(#fdfdfd, #d9d9d9); }

.toolbar { display: flex; height: 31px; padding-left: 2px; background: #edf1f8; border-bottom: 1px solid #a0a0a4; }
.group { display: flex; height: 27px; margin-top: 1px; border-radius: 3px; background: linear-gradient(#fafafa, #d6d7d9); }
.group button { display: flex; align-items: center; justify-content: center; width: 24px; height: 25px; }
.on { border: 1px solid #5d86b8 !important; border-radius: 2px; background: #c6daf1; }
.more { width: 17px; display: flex; align-items: flex-end; justify-content: center; padding-bottom: 4px; }

main { position: relative; flex: 1; display: flex; min-height: 0; padding: 0 1px 6px 1px; }
.cap { display: flex; align-items: center; gap: 6px; height: 17px; padding: 0 4px 0 2px; background: #808080; color: #cbc8a2; }
.cap h2 { flex: 1; font-size: 12px; line-height: 16px; }
.navy { background: #0a246a; color: #fff; }

.browser { display: flex; flex-direction: column; width: 267px; border-right: 1px solid #a8a8a8; border-bottom: 1px solid #a8a8a8; background: #f0f0f0; }
.well { flex: 1; display: flex; flex-direction: column; margin: 0 2px 0 1px; border: 3px solid #fff; border-top-width: 4px; border-bottom-color: #f4f4f4; background: #fff; box-shadow: 0 1px #a0a0a0; }
.filter { display: flex; align-items: center; height: 31px; padding: 0 5px 0 5px; border-top: 2px solid #6b6b6b; border-left: 2px solid #777; border-bottom: 1px solid #a0a0a0; background: #f0f0f0; font: 11px/16px "Liberation Sans", sans-serif; color: #000; }
.filter label { margin-right: 3px; }
.filter input { flex: 1; min-width: 0; height: 20px; border: 1px solid #a9a9a9; background: #fff; margin-right: 4px; padding: 0 3px; font: inherit; }
.filter button { margin-left: 2px; margin-right: 4px; }
.tree { flex: 1; border-left: 2px solid #777; border-right: 1px solid #ddd; font: 11px/16px "Liberation Sans", sans-serif; color: #000; }
.node { display: flex; align-items: center; height: 16px; position: relative; }
.node span { margin-left: 3px; padding: 0 2px; white-space: nowrap; }
.node .sel { background: #efefef; }
.node i { width: 6px; border-top: 1px dotted #808080; }
.node b { width: 9px; padding-left: 4px; }
.node b::after { content: ""; display: block; border-top: 1px dotted #808080; }
.root { padding-left: 4px; }
.models, .kids { position: relative; }
.models .node { padding-left: 8px; }
.models .kids .node { padding-left: 27px; }
.models::before { content: ""; position: absolute; left: 12px; top: 0; height: 104px; border-left: 1px dotted #808080; }
.kids::before { content: ""; position: absolute; left: 31px; top: 0; bottom: 8px; border-left: 1px dotted #808080; }
.exp { position: relative; }
.btabs { display: flex; align-items: flex-start; height: 22px; font: 11px/18px "Liberation Sans", sans-serif; color: #000; margin-top: 1px; }
.btabs button { display: flex; align-items: center; gap: 5px; height: 19px; padding: 0 3px; border: 1px solid #b5b5b5; border-top: 0; margin-top: 1px; }
.btabs .cur { height: 22px; padding: 0 7px; gap: 6px; background: #fff; border: 0; margin: 0; }

.work { flex: 1; display: flex; flex-direction: column; min-width: 0; margin: 0 8px 0 7px; }
.dtabs { display: flex; height: 19px; padding-left: 9px; }
.dtabs button { position: relative; z-index: 0; height: 18px; margin-top: 1px; padding: 0 5px 0 13px; line-height: 17px; border-top: 1px solid #999; border-right: 1px solid #888; border-radius: 0 3px 0 0; color: #000; }
.dtabs button::before { content: ""; position: absolute; z-index: -1; left: -4px; top: -1px; bottom: 0; width: 16px; border-left: 1px solid #888; border-top: 1px solid #999; border-radius: 4px 0 0 0; transform: skewX(-36deg); }
.dtabs .cur { font-weight: 700; border: 0; padding: 0 2px 0 16px; background: linear-gradient(90deg, transparent 8px, #f1f0ed 8px); }
.dtabs .cur::before { background: #f1f0ed; border: 0; }
.dtabs button + button { margin-left: 1px; }
.fill { flex: 1; }
.dtabs .ctl { border: 0; padding: 0 4px; }
.dtabs .ctl::before { display: none; }
.frame { flex: 1; display: grid; grid-template: minmax(0, 1fr) 17px / minmax(0, 1fr) 16px; margin: 1px 2px 2px; border: 2px solid #828282; border-top-width: 3px; border-radius: 3px; box-shadow: 0 0 0 1px #d5d2c2, 0 0 0 2px #8e8a8a; background: #f0f0f0; min-height: 0; }
.canvas { position: relative; overflow: hidden; background: #fff; }
.wires { position: absolute; left: 0; top: 0; }
.lbl { font: 10px "Liberation Sans", sans-serif; fill: #000; }
.entity { position: absolute; border: 1px solid #00a5a8; background: linear-gradient(135deg, #fff, #d4ffff 50%, #b0ffff); font: 10px/13px "Liberation Sans", sans-serif; color: #000; }
.assoc { background: linear-gradient(135deg, #fff, #cfd2ff 50%, #b0b8ff); }
.entity h3 { height: 17px; font-size: 10px; line-height: 16px; text-align: center; border-bottom: 1px solid #00a5a8; }
.attrs { padding: 1px 0 2px 4px; }
.attr { display: grid; height: 13px; white-space: nowrap; }
.key span { text-decoration: underline; }
.entity footer { display: flex; gap: 8px; height: 17px; padding-left: 4px; line-height: 15px; border-top: 1px solid #00a5a8; }
.vbar { display: flex; flex-direction: column; align-items: center; padding: 5px 0 5px; }
.vbar span { width: 15px; height: 17px; margin: 272px 0 auto; background: #cdcdcd; }
.hbar { display: flex; align-items: center; padding: 0 5px 2px 4px; }
.hbar span { width: 30px; height: 15px; margin: 0 auto 0 408px; background: #cdcdcd; }

.toolbox { display: flex; flex-direction: column; width: 188px; border: 1px solid #a8a8a8; border-top: 0; }
.tbody { flex: 1; margin: 2px 1px 2px 2px; background: linear-gradient(90deg, #edf1f7, #fff); }
.views { display: flex; height: 29px; padding: 1px 0 0 1px; gap: 2px; border-radius: 3px; background: linear-gradient(#fafafa, #d2d2d2); border-bottom: 1px solid #c2c2c2; }
.views button { display: flex; align-items: center; justify-content: center; width: 24px; height: 24px; }
.sect { display: flex; align-items: center; gap: 4px; width: 100%; height: 22px; padding: 0; background: linear-gradient(90deg, #f4f4f4, #dcdcdc); border-top: 1px solid #c8c8c8; text-align: left; }
.sect span { padding-top: 2px; }
.shut { background: linear-gradient(#f0f0f0, #d4d4d4); }
.tools { display: flex; flex-wrap: wrap; }
.tools button { display: flex; align-items: center; justify-content: center; width: 26px; height: 26px; }
.tools .on { width: 24px; height: 24px; margin: 1px; }
.mark { position: absolute; left: 97px; top: 262px; font: 23px/26px Lato, sans-serif; color: #666; white-space: nowrap; }

.output { margin: 0 1px; border-bottom: 2px solid #a8a8a8; }
.output .cap { height: 18px; }
.obody { display: flex; height: 9px; overflow: hidden; background: #c8c8c8; }
.otabs { display: flex; align-items: flex-end; width: 658px; border-right: 1px solid #000; font: 12px/20px "Liberation Sans", sans-serif; color: #000; }
.step { flex: none; width: 17px; height: 16px; display: flex; align-items: center; justify-content: center; background: #f0f0f0; border-right: 1px solid #444; border-bottom: 1px solid #444; }
.otab { position: relative; z-index: 0; height: 18px; margin-left: 7px; padding: 0 4px; line-height: 20px; }
.otab::before { content: ""; position: absolute; z-index: -1; inset: 0 0 1px 0; background: #f4f4f4; border-left: 1px solid #444; border-bottom: 1px solid #777; transform: skewX(20deg); }
.otab::after { content: ""; position: absolute; z-index: -1; inset: 0 -4px 1px auto; width: 8px; background: #f4f4f4; border-right: 1px solid #444; transform: skewX(-20deg); }
.oscroll { flex: 1; display: flex; align-items: flex-end; padding: 0 14px 0 6px; margin-left: 2px; border-left: 1px solid #888; background: #f0f0f0; }
.oscroll span { flex: 1; height: 9px; margin: 0 5px 0 19px; background: #cdcdcd; }
.status { height: 26px; padding-left: 12px; line-height: 30px; background: linear-gradient(#fcfcfd, #d6d8da); }
.task { display: flex; height: 2px; padding-left: 133px; gap: 1px; background: #6f8f9d; }
.task span { width: 44px; background: #8fa5b0; }
.task span:nth-child(2) { margin-left: 94px; }
.task .lit { background: #fff; }
</style>
